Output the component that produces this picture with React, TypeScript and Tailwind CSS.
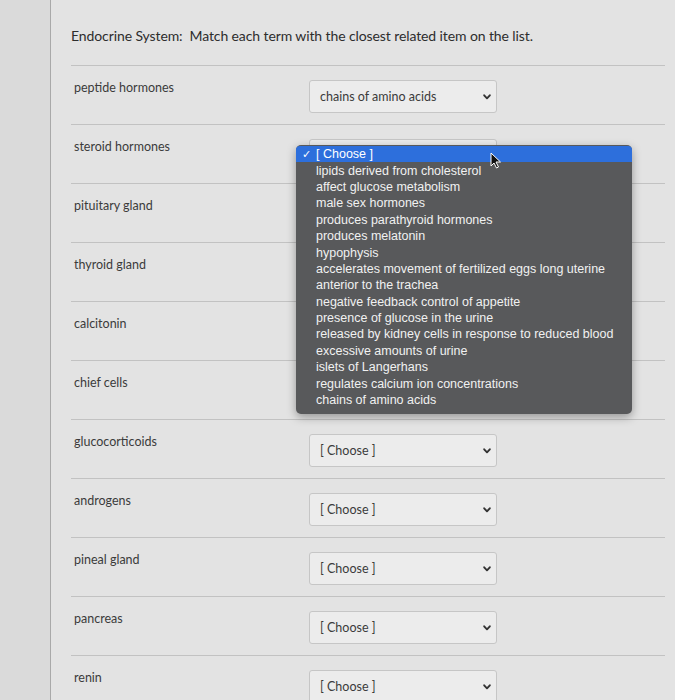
import React from "react";

const rows: { label: string; value: string; covered?: boolean }[] = [
  { label: "peptide hormones", value: "chains of amino acids" },
  { label: "steroid hormones", value: "[Choose]", covered: true },
  { label: "pituitary gland", value: "[Choose]", covered: true },
  { label: "thyroid gland", value: "[Choose]", covered: true },
  { label: "calcitonin", value: "[Choose]", covered: true },
  { label: "chief cells", value: "[Choose]", covered: true },
  { label: "glucocorticoids", value: "[Choose]" },
  { label: "androgens", value: "[Choose]" },
  { label: "pineal gland", value: "[Choose]" },
  { label: "pancreas", value: "[Choose]" },
  { label: "renin", value: "[Choose]" },
];

const options = [
  "lipids derived from cholesterol",
  "affect glucose metabolism",
  "male sex hormones",
  "produces parathyroid hormones",
  "produces melatonin",
  "hypophysis",
  "accelerates movement of fertilized eggs long uterine",
  "anterior to the trachea",
  "negative feedback control of appetite",
  "presence of glucose in the urine",
  "released by kidney cells in response to reduced blood",
  "excessive amounts of urine",
  "islets of Langerhans",
  "regulates calcium ion concentrations",
  "chains of amino acids",
];

function Chevron() {
  return (
    <svg width="8" height="6" viewBox="0 0 8 6" className="shrink-0">
      <path d="M1.2 1.3 L4 4.3 L6.8 1.3" fill="none" stroke="#333" strokeWidth="1.9" strokeLinecap="round" strokeLinejoin="round" />
    </svg>
  );
}

export default function App() {
  return (
    <div
      className="relative w-[675px] h-[700px] overflow-hidden bg-[#dedede] flex"
      style={{ fontFamily: "Lato, 'Open Sans', sans-serif" }}
    >
      <div className="w-[51px] shrink-0 bg-[#dadada] border-r border-[#a9a9a9]" />
      <div className="flex-1 flex flex-col bg-[#e3e3e3]">
        <div className="h-[3px] ml-[40px] bg-[#2f2f2f]" />
        <div className="pl-[20px] pr-[10px]">
          <div className="mt-[26px] h-[20px] leading-[20px] text-[14px] text-[#2d2d2d] tracking-[-0.1px]">
            Endocrine System:&nbsp; Match each term with the closest related item on the list.
          </div>
          <div className="mt-[19px] flex flex-col">
            {rows.map((r) => (
              <div key={r.label} className="h-[59px] border-t border-[#c2c2c2] flex shrink-0">
                <div className="w-[238px] pt-[14px] leading-[16px] text-[12.5px] text-[#3b3b3b] pl-[3px]">
                  {r.label}
                </div>
                <div className="mt-[14px] h-[33px] w-[188px] rounded-[3px] border border-[#c6c6c6] bg-[#ececec] flex items-center justify-between pl-[10px] pr-[5px]">
                  {r.covered ? null : (
                    <>
                      <span className="text-[12.5px] leading-[16px] text-[#3b3b3b]">
                        {r.value === "[Choose]" ? "[ Choose ]" : r.value}
                      </span>
                      <Chevron />
                    </>
                  )}
                </div>
              </div>
            ))}
          </div>
        </div>
      </div>

      {/* open native dropdown */}
      <div
        className="absolute left-[296px] top-[145px] w-[336px] rounded-[5px] bg-[#58595b] pt-[1px] pb-[6px] shadow-[0_3px_10px_rgba(0,0,0,0.35)]"
        style={{ fontFamily: "'Liberation Sans', Arial, sans-serif" }}
      >
        <div className="h-[16.4px] leading-[16px] bg-[#2d6fdc] rounded-t-[4px] flex items-center text-[12.5px] text-white overflow-hidden">
          <span className="w-[20px] pl-[6px] text-[11px] leading-[16px]">✓</span>
          <span className="leading-[16px]">[ Choose ]</span>
        </div>
        {options.map((o) => (
          <div key={o} className="h-[16.4px] leading-[16px] overflow-hidden flex items-center pl-[20px] text-[12.5px] text-[#f1f1f1] whitespace-nowrap">
            {o}
          </div>
        ))}
      </div>

      {/* mouse cursor */}
      <svg className="absolute left-[490px] top-[152px]" width="12" height="17" viewBox="0 0 12 17">
        <path d="M1 1 L1 14 L4 11 L6.5 16 L8.5 15 L6 10 L10.5 10 Z" fill="#111" stroke="#fff" strokeWidth="1" strokeLinejoin="round" />
      </svg>
    </div>
  );
}
